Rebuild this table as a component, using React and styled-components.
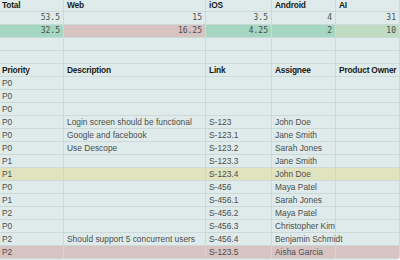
import React from 'react';
import styled, { createGlobalStyle } from 'styled-components';

const GlobalStyle = createGlobalStyle`
  html, body {
    margin: 0;
    padding: 0;
    background: #ffffff;
    overflow: hidden;
  }
`;

const colors = {
  bg: '#deebea',
  line: '#cbdad9',
  green: '#a4d6c1',
  greenSoft: '#bfdcc3',
  pink: '#d8c3c3',
  yellow: '#e1e2be',
};

const Sheet = styled.div`
  width: 400px;
  height: 261px;
  margin-top: -1px;
  display: grid;
  grid-template-columns: 64px 142px 66px 64px 64px;
  grid-auto-rows: 13px;
  background: ${colors.bg};
  border-bottom-right-radius: 5px;
  overflow: hidden;
  font-family: 'Liberation Sans', Arial, sans-serif;
  font-size: 8.4px;
`;

// text spills into the empty cell on its right, like a spreadsheet
const Cell = styled.div`
  box-sizing: border-box;
  border-right: 1px solid ${colors.line};
  border-bottom: 1px solid ${colors.line};
  background: ${p => p.$bg || 'transparent'};
  padding: 0 ${p => (p.$num ? '3px' : '2px')} 0 ${p => (p.$first ? '2px' : '3px')};
  display: flex;
  align-items: center;
  justify-content: ${p => (p.$num ? 'flex-end' : 'flex-start')};
  white-space: nowrap;
  overflow: visible;
  min-width: 0;
  color: ${p => (p.$bold ? '#1c1c1c' : '#4d4d4d')};
  font-weight: ${p => (p.$bold ? 700 : 400)};
  letter-spacing: ${p => (p.$bold ? '-0.2px' : '0')};
  font-family: ${p => (p.$num ? "'DejaVu Sans Mono', monospace" : 'inherit')};
  font-size: ${p => (p.$num ? '8px' : 'inherit')};
  line-height: 12px;
`;

const totals = {
  head: ['Total', 'Web', 'iOS', 'Android', 'AI'],
  first: ['53.5', '15', '3.5', '4', '31'],
  second: [
    ['32.5', colors.green],
    ['16.25', colors.pink],
    ['4.25', colors.green],
    ['2', colors.green],
    ['10', colors.greenSoft],
  ],
};

const taskHead = ['Priority', 'Description', 'Link', 'Assignee', 'Product Owner'];

const tasks = [
  ['P0', '', '', '', ''],
  ['P0', '', '', '', ''],
  ['P0', '', '', '', ''],
  ['P0', 'Login screen should be functional', 'S-123', 'John Doe', ''],
  ['P0', 'Google and facebook', 'S-123.1', 'Jane Smith', ''],
  ['P0', 'Use Descope', 'S-123.2', 'Sarah Jones', ''],
  ['P1', '', 'S-123.3', 'Jane Smith', ''],
  ['P1', '', 'S-123.4', 'John Doe', '', colors.yellow],
  ['P0', '', 'S-456', 'Maya Patel', ''],
  ['P1', '', 'S-456.1', 'Sarah Jones', ''],
  ['P2', '', 'S-456.2', 'Maya Patel', ''],
  ['P0', '', 'S-456.3', 'Christopher Kim', ''],
  ['P2', 'Should support 5 concurrent users', 'S-456.4', 'Benjamin Schmidt', ''],
  ['P2', '', 'S-123.5', 'Aisha Garcia', '', colors.pink],
];

const App = () => {
  return (
    <>
      <GlobalStyle />
      <Sheet>
        {totals.head.map((h, i) => (
          <Cell key={'h' + i} $bold $first={i === 0}>{h}</Cell>
        ))}
        {totals.first.map((v, i) => (
          <Cell key={'a' + i} $num>{v}</Cell>
        ))}
        {totals.second.map(([v, bg], i) => (
          <Cell key={'b' + i} $num $bg={bg}>{v}</Cell>
        ))}
        {[0, 1, 2, 3, 4, 5, 6, 7, 8, 9].map(i => (
          <Cell key={'e' + i} />
        ))}
        {taskHead.map((h, i) => (
          <Cell key={'t' + i} $bold $first={i === 0}>{h}</Cell>
        ))}
        {tasks.map((row, r) =>
          row.slice(0, 5).map((v, i) => (
            <Cell key={r + '-' + i} $first={i === 0} $bg={row[5]}>{v}</Cell>
          ))
        )}
      </Sheet>
    </>
  );
};

export default App;
